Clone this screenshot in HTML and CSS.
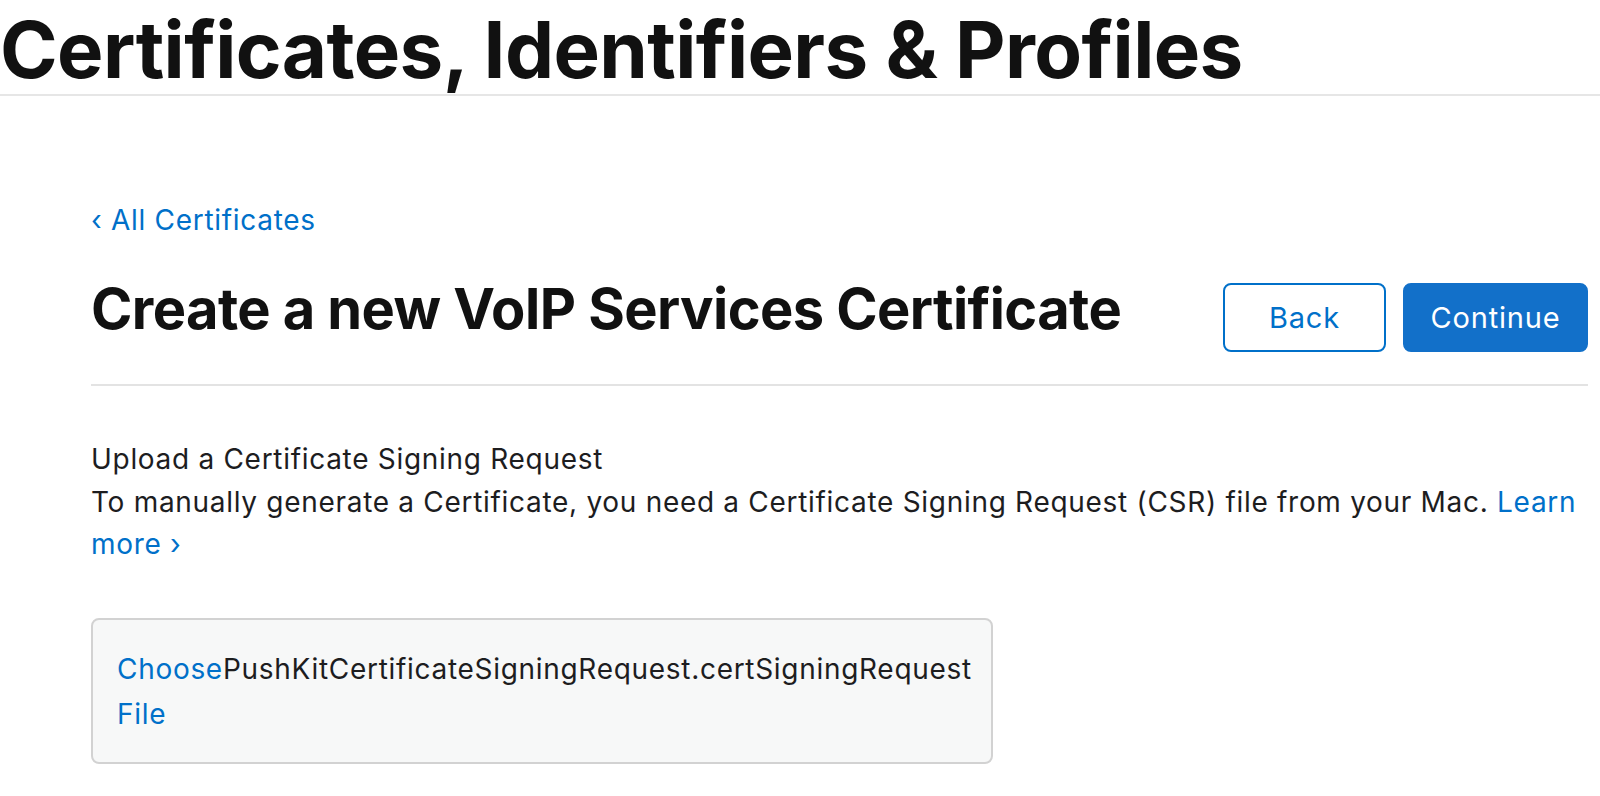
FILE: index.html
```html
<!DOCTYPE html>
<html lang="en">
<head>
<meta charset="utf-8">
<title>Certificates, Identifiers &amp; Profiles</title>
<link rel="stylesheet" href="styles.css">
</head>
<body>
<header class="site-header">
  <h1 class="site-title">Certificates, Identifiers &amp; Profiles</h1>
</header>
<main class="content">
  <a class="back-link" href="#"><span class="chev">‹</span> All Certificates</a>
  <div class="heading-row">
    <h2 class="page-title">Create a new VoIP Services Certificate</h2>
    <div class="actions">
      <button class="btn btn-secondary" type="button">Back</button>
      <button class="btn btn-primary" type="button">Continue</button>
    </div>
  </div>
  <section class="upload">
    <h3 class="upload-title">Upload a Certificate Signing Request</h3>
    <p class="upload-desc">To manually generate a Certificate, you need a Certificate Signing Request (CSR) file from your Mac. <a class="link" href="#">Learn</a> <a class="link" href="#">more ›</a></p>
    <div class="file-box">
      <span class="link">Choose</span>PushKitCertificateSigningRequest.certSigningRequest <span class="link">File</span>
    </div>
  </section>
</main>
</body>
</html>
```
FILE: styles.css
```css
html, body {
  margin: 0;
  padding: 0;
  background: #ffffff;
}
body {
  font-family: "Inter", "Liberation Sans", sans-serif;
  color: #1d1d1f;
}
.site-header {
  border-bottom: 2px solid #e6e6e6;
  height: 96px;
  box-sizing: border-box;
}
.site-title {
  margin: 0;
  padding-top: 5px;
  font-size: 78px;
  line-height: 90px;
  font-weight: 700;
  color: #111111;
  letter-spacing: -0.6px;
  white-space: nowrap;
}
.content {
  padding: 0 12px 0 91px;
}
.back-link {
  display: inline-block;
  margin-top: 104px;
  font-size: 28px;
  line-height: 40px;
  letter-spacing: 0.7px;
  color: #0070c9;
  text-decoration: none;
}
.heading-row {
  display: flex;
  justify-content: space-between;
  align-items: flex-start;
  margin-top: 35px;
  padding-bottom: 32px;
  border-bottom: 2px solid #e3e3e3;
}
.page-title {
  margin: 0;
  font-size: 56px;
  line-height: 68px;
  font-weight: 700;
  color: #111111;
  letter-spacing: -0.6px;
}
.actions {
  display: flex;
  gap: 17px;
  margin-top: 8px;
}
.btn {
  height: 69px;
  border-radius: 8px;
  font-family: inherit;
  font-size: 29px;
  letter-spacing: 0.8px;
  box-sizing: border-box;
  cursor: pointer;
}
.btn-secondary {
  width: 163px;
  background: #ffffff;
  border: 2px solid #0070c9;
  color: #0070c9;
}
.btn-primary {
  width: 185px;
  background: #1270c9;
  border: 2px solid #1270c9;
  color: #ffffff;
}
.upload {
  padding-top: 52px;
}
.upload-title {
  margin: 0;
  font-size: 28px;
  line-height: 43px;
  letter-spacing: 0.7px;
  font-weight: 400;
  color: #1d1d1f;
}
.upload-desc {
  margin: 0;
  font-size: 28px;
  line-height: 42px;
  letter-spacing: 0.7px;
  color: #1d1d1f;
}
.link {
  color: #0070c9;
  text-decoration: none;
}
.file-box {
  margin-top: 53px;
  width: 902px;
  box-sizing: border-box;
  padding: 27px 8px 25px 24px;
  background: #f7f8f8;
  border: 2px solid #d2d2d2;
  border-radius: 8px;
  font-size: 28px;
  line-height: 45px;
  letter-spacing: 0.7px;
  color: #1d1d1f;
}
```
